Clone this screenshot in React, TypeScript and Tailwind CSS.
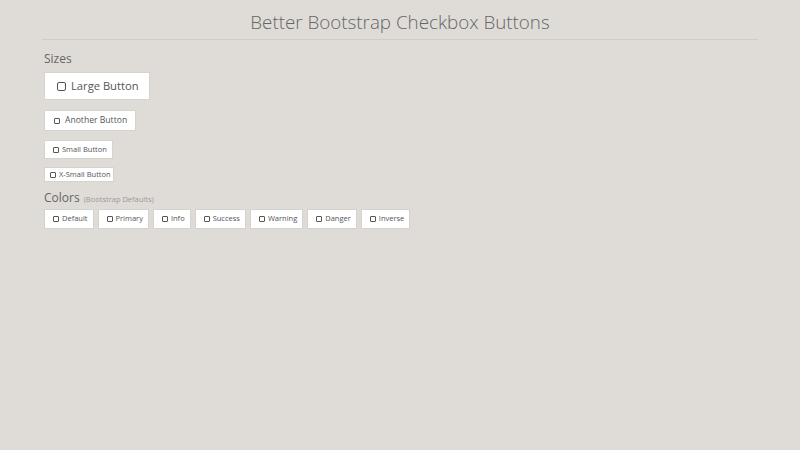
import React from "react";

function Box({ size, r }: { size: number; r: string }) {
  return (
    <span
      className={`inline-block border border-[#555] shrink-0 ${r}`}
      style={{ width: size, height: size }}
    />
  );
}

function Btn({
  label,
  cls,
  box,
  r = "rounded-[1px]",
}: {
  label: string;
  cls: string;
  box: number;
  r?: string;
}) {
  return (
    <div
      className={`inline-flex items-center bg-white border border-[#d6d3cd] text-[#555] whitespace-nowrap ${cls}`}
    >
      <Box size={box} r={r} />
      <span>{label}</span>
    </div>
  );
}

export default function App() {
  const colors = ["Default", "Primary", "Info", "Success", "Warning", "Danger", "Inverse"];
  return (
    <div
      className="w-[800px] h-[450px] bg-[#dfdcd7] text-[#555]"
      style={{ fontFamily: '"Open Sans", sans-serif' }}
    >
      <div className="mx-[42px] pt-[8px]">
        <h1 className="text-center text-[18.8px] font-light text-[#666] leading-[28px]">
          Better Bootstrap Checkbox Buttons
        </h1>
        <div className="mt-[3px] border-t border-[#d0cdc7]" />
        <div className="px-[2px]">
          <div className="mt-[11px] text-[12px] leading-[16px] text-[#666]">Sizes</div>
          <div className="mt-[5px] flex flex-col items-start">
            <Btn label="Large Button" cls="h-[28px] pl-[12px] pr-[10px] gap-[5px] text-[11.2px]" box={9} r="rounded-[2px]" />
            <Btn label="Another Button" cls="mt-[10px] h-[21px] pl-[9px] pr-[8px] gap-[5px] text-[8.6px]" box={6} />
            <Btn label="Small Button" cls="mt-[9px] h-[19px] pl-[8px] pr-[5px] gap-[3px] text-[7.5px]" box={6} />
            <Btn label="X-Small Button" cls="mt-[8px] h-[15px] pl-[5px] pr-[2px] gap-[3px] text-[7.5px]" box={6} />
          </div>
          <div className="mt-[8px] flex items-baseline gap-[4px]">
            <span className="text-[12px] leading-[16px] text-[#666]">Colors</span>
            <span className="text-[7.5px] text-[#999]">(Bootstrap Defaults)</span>
          </div>
          <div className="mt-[3px] flex gap-[4px]">
            {colors.map((c) => (
              <Btn key={c} label={c} cls="h-[20px] pl-[8px] pr-[5px] gap-[3px] text-[7.5px]" box={6} />
            ))}
          </div>
        </div>
      </div>
    </div>
  );
}
